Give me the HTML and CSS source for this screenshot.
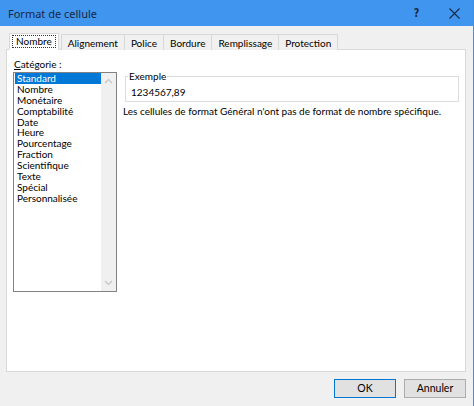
FILE: index.html
```html
<!DOCTYPE html>
<html lang="fr">
<head>
<meta charset="utf-8">
<title>Format de cellule</title>
<link rel="stylesheet" href="styles.css">
</head>
<body>
<div class="window">
  <div class="titlebar">
    <span class="title">Format de cellule</span>
    <div class="controls">
      <div class="capbtn"><span class="help">?</span></div>
      <div class="capbtn"><svg class="close" width="11" height="11" viewBox="0 0 11 11"><path d="M0.5 0.5 L10.5 10.5 M10.5 0.5 L0.5 10.5" stroke="#1b2a45" stroke-width="1.1" fill="none"/></svg></div>
    </div>
  </div>
  <div class="body">
    <div class="tabs">
      <div class="tab active"><span class="focus">Nombre</span></div>
      <div class="tab">Alignement</div>
      <div class="tab">Police</div>
      <div class="tab">Bordure</div>
      <div class="tab">Remplissage</div>
      <div class="tab">Protection</div>
    </div>
    <div class="panel">
      <div class="left">
        <div class="label"><u>C</u>atégorie :</div>
        <div class="listbox">
          <ul class="items">
            <li class="sel">Standard</li>
            <li>Nombre</li>
            <li>Monétaire</li>
            <li>Comptabilité</li>
            <li>Date</li>
            <li>Heure</li>
            <li>Pourcentage</li>
            <li>Fraction</li>
            <li>Scientifique</li>
            <li>Texte</li>
            <li>Spécial</li>
            <li>Personnalisée</li>
          </ul>
          <div class="scrollbar">
            <svg width="9" height="6" viewBox="0 0 9 6"><path d="M1 5 L4.5 1.5 L8 5" stroke="#c4c4c4" stroke-width="1.2" fill="none"/></svg>
            <svg width="9" height="6" viewBox="0 0 9 6"><path d="M1 1 L4.5 4.5 L8 1" stroke="#c4c4c4" stroke-width="1.2" fill="none"/></svg>
          </div>
        </div>
      </div>
      <div class="right">
        <fieldset class="sample">
          <legend>Exemple</legend>
          <div class="value">1234567,89</div>
        </fieldset>
        <p class="desc">Les cellules de format Général n'ont pas de format de nombre spécifique.</p>
      </div>
    </div>
    <div class="buttons">
      <button class="btn default">OK</button>
      <button class="btn">Annuler</button>
    </div>
  </div>
</div>
</body>
</html>
```

FILE: styles.css
```css
* { box-sizing: border-box; }
html, body { margin: 0; padding: 0; }
body {
  width: 474px;
  height: 406px;
  background: #f0f0f0;
  font-family: Lato, "Noto Sans", sans-serif;
  font-size: 10px;
  color: #000;
  overflow: hidden;
}
.window {
  width: 474px;
  height: 406px;
  display: flex;
  flex-direction: column;
  border-right: 1px solid #3f8fe0;
}
.titlebar {
  height: 26px;
  flex: none;
  background: #4096ee;
  display: flex;
  align-items: center;
  justify-content: space-between;
  padding-left: 8px;
}
.title {
  font-family: "Noto Sans", sans-serif;
  font-size: 11px;
  color: #1a2744;
}
.controls {
  display: flex;
  height: 100%;
}
.capbtn {
  width: 38px;
  display: flex;
  align-items: center;
  justify-content: center;
}
.help {
  font-size: 12px;
  font-weight: bold;
  color: #1b2a45;
  font-family: "DejaVu Sans", sans-serif;
  transform: scaleX(0.8);
}
.close { display: block; }
.body {
  flex: 1;
  display: flex;
  flex-direction: column;
  padding: 7px 7px 0 6px;
}
.tabs {
  display: flex;
  align-items: flex-end;
  padding-left: 3px;
  height: 17px;
  position: relative;
  z-index: 1;
  margin-bottom: -1px;
}
.tab {
  height: 16px;
  padding: 1px 6px 0;
  border: 1px solid #d9d9d9;
  border-bottom: none;
  background: #f0f0f0;
  display: flex;
  align-items: center;
  line-height: 13px;
  margin-left: -1px;
}
.tab:nth-child(2) { margin-left: 2px; }
.tab.active {
  height: 17px;
  background: #fff;
  padding: 0 2px;
  margin-left: 0;
  border-bottom: 1px solid #fff;
}
.focus {
  border: 1px dotted #333;
  padding: 0 3px;
  line-height: 11px;
}
.panel {
  height: 323px;
  background: #fff;
  border: 1px solid #d9d9d9;
  display: flex;
  padding: 8px 0 0 6px;
  gap: 6px;
}
.left { width: 104px; flex: none; }
.label { line-height: 13px; margin-bottom: 1px; padding-left: 1px; }
.label u { text-decoration-thickness: 1px; text-underline-offset: 1px; }
.listbox {
  height: 220px;
  border: 1px solid #828282;
  display: flex;
  padding: 0 0 0 1px;
}
.items {
  list-style: none;
  margin: 0;
  padding: 0;
  flex: 1;
}
.items li {
  line-height: 10.9px;
  height: 10.9px;
  padding-left: 2px;
  white-space: nowrap;
}
.items li.sel {
  background: #0078d7;
  color: #fff;
}
.scrollbar {
  width: 15px;
  background: #f0f0f0;
  display: flex;
  flex-direction: column;
  justify-content: space-between;
  align-items: center;
  padding: 5px 0 5px;
}
.scrollbar svg { display: block; }
.right {
  flex: 1;
  padding-right: 6px;
  padding-top: 12px;
}
.sample {
  margin: 0 0 0 2px;
  padding: 0 4px 2px 2px;
  border: 1px solid #dcdcdc;
  min-width: 0;
}
.sample legend {
  padding: 0 1px;
  line-height: 13px;
}
.value {
  line-height: 13px;
  margin-top: 3px;
  padding-left: 3px;
}
.desc {
  margin: 3px 0 0 0;
  line-height: 13px;
  white-space: nowrap;
}
.buttons {
  display: flex;
  justify-content: flex-end;
  gap: 8px;
  padding-top: 7px;
}
.btn {
  width: 62px;
  height: 19px;
  padding: 0;
  font-family: Lato, "Noto Sans", sans-serif;
  font-size: 10.5px;
  color: #000;
  background: #e1e1e1;
  border: 1px solid #adadad;
  line-height: 15px;
}
.btn.default { border-color: #0078d7; }
```
